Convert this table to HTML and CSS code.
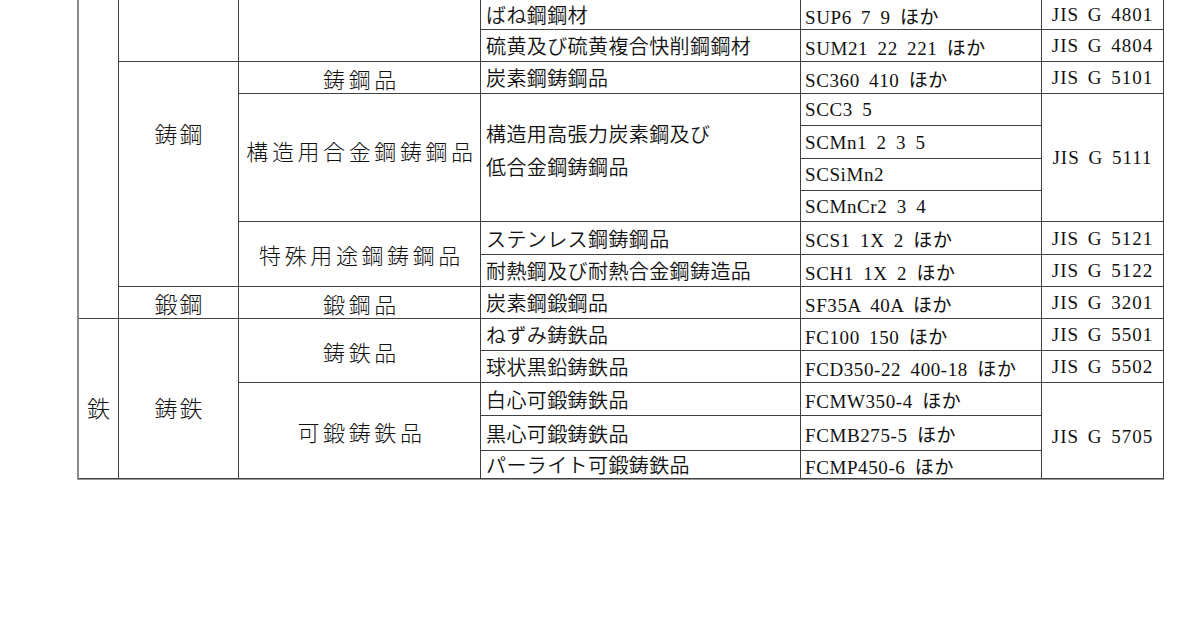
FILE: index.html
```html
<!DOCTYPE html>
<html lang="ja">
<head>
<meta charset="utf-8">
<title>鉄鋼材料 JIS 規格</title>
<link rel="stylesheet" href="styles.css">
</head>
<body>
<div class="sheet">
  <!-- column 1 -->
  <div class="cell s10"></div>
  <div class="cell s5 big center lower">鉄</div>

  <!-- column 2 -->
  <div class="cell s2"></div>
  <div class="cell s7 big center upper">鋳鋼</div>
  <div class="cell s1 big center">鍛鋼</div>
  <div class="cell s5 big center lower">鋳鉄</div>

  <!-- column 3 -->
  <div class="cell s2"></div>
  <div class="cell s1 mid center">鋳鋼品</div>
  <div class="cell s4 mid center up-a">構造用合金鋼鋳鋼品</div>
  <div class="cell s2 mid center">特殊用途鋼鋳鋼品</div>
  <div class="cell s1 mid center">鍛鋼品</div>
  <div class="cell s2 mid center">鋳鉄品</div>
  <div class="cell s3 mid center">可鍛鋳鉄品</div>

  <!-- column 4 -->
  <div class="cell s1 name">ばね鋼鋼材</div>
  <div class="cell s1 name">硫黄及び硫黄複合快削鋼鋼材</div>
  <div class="cell s1 name">炭素鋼鋳鋼品</div>
  <div class="cell s4 name multi">構造用高張力炭素鋼及び<br>低合金鋼鋳鋼品</div>
  <div class="cell s1 name">ステンレス鋼鋳鋼品</div>
  <div class="cell s1 name">耐熱鋼及び耐熱合金鋼鋳造品</div>
  <div class="cell s1 name">炭素鋼鍛鋼品</div>
  <div class="cell s1 name">ねずみ鋳鉄品</div>
  <div class="cell s1 name">球状黒鉛鋳鉄品</div>
  <div class="cell s1 name">白心可鍛鋳鉄品</div>
  <div class="cell s1 name">黒心可鍛鋳鉄品</div>
  <div class="cell s1 name">パーライト可鍛鋳鉄品</div>

  <!-- column 5 -->
  <div class="cell s1 code">SUP6 7 9 ほか</div>
  <div class="cell s1 code">SUM21 22 221 ほか</div>
  <div class="cell s1 code">SC360 410 ほか</div>
  <div class="cell s1 code">SCC3 5</div>
  <div class="cell s1 code">SCMn1 2 3 5</div>
  <div class="cell s1 code">SCSiMn2</div>
  <div class="cell s1 code">SCMnCr2 3 4</div>
  <div class="cell s1 code">SCS1 1X 2 ほか</div>
  <div class="cell s1 code">SCH1 1X 2 ほか</div>
  <div class="cell s1 code">SF35A 40A ほか</div>
  <div class="cell s1 code">FC100 150 ほか</div>
  <div class="cell s1 code">FCD350-22 400-18 ほか</div>
  <div class="cell s1 code">FCMW350-4 ほか</div>
  <div class="cell s1 code">FCMB275-5 ほか</div>
  <div class="cell s1 code">FCMP450-6 ほか</div>

  <!-- column 6 -->
  <div class="cell s1 std">JIS G 4801</div>
  <div class="cell s1 std">JIS G 4804</div>
  <div class="cell s1 std">JIS G 5101</div>
  <div class="cell s4 std">JIS G 5111</div>
  <div class="cell s1 std">JIS G 5121</div>
  <div class="cell s1 std">JIS G 5122</div>
  <div class="cell s1 std">JIS G 3201</div>
  <div class="cell s1 std">JIS G 5501</div>
  <div class="cell s1 std">JIS G 5502</div>
  <div class="cell s3 std lower-s">JIS G 5705</div>
</div>
</body>
</html>
```

FILE: styles.css
```css
html, body {
  margin: 0;
  padding: 0;
  background: #ffffff;
}

body {
  width: 1200px;
  height: 627px;
  overflow: hidden;
  font-family: "Liberation Serif", "Noto Sans CJK JP", serif;
  color: #111111;
}

.sheet {
  margin-left: 77px;
  width: 1085px;
  border-left: 2px solid #8c8c8c;
  border-bottom: 1px solid #9a9a9a;
  display: grid;
  grid-template-columns: 40px 120px 242px 320px 241px 122px;
  grid-template-rows: 30px 32px 32px 32px 33px 32px 31px 33px 32px 32px 32px 32px 33px 35px 28px;
  grid-auto-flow: column;
}

.cell {
  box-sizing: border-box;
  border-right: 1px solid #404040;
  border-bottom: 1px solid #404040;
  display: flex;
  align-items: center;
  white-space: nowrap;
  overflow: hidden;
}

.s1 { grid-row: span 1; }
.s2 { grid-row: span 2; }
.s3 { grid-row: span 3; }
.s4 { grid-row: span 4; }
.s5 { grid-row: span 5; }
.s7 { grid-row: span 7; }
.s10 { grid-row: span 10; }

.center {
  justify-content: center;
}

.big {
  font-family: "Noto Sans CJK JP", sans-serif;
  font-size: 23px;
  font-weight: 300;
  letter-spacing: 2px;
  padding-left: 2px;
}

.mid {
  font-family: "Noto Sans CJK JP", sans-serif;
  font-size: 22px;
  font-weight: 300;
  letter-spacing: 3.6px;
  padding-left: 4px;
}

.upper {
  padding-bottom: 82px;
}

.lower {
  padding-top: 16px;
}

.up-a {
  padding-bottom: 15px;
}

.name {
  font-family: "Noto Sans CJK JP", sans-serif;
  font-size: 20px;
  font-weight: 350;
  letter-spacing: 0.4px;
  padding-left: 5px;
}

.multi {
  line-height: 33px;
  padding-bottom: 16px;
}

.code {
  font-size: 19px;
  letter-spacing: 0.6px;
  word-spacing: 4px;
  padding-left: 4px;
  padding-top: 1px;
}

.std {
  font-size: 19px;
  letter-spacing: 1px;
  word-spacing: 3px;
  justify-content: center;
  padding-top: 1px;
}

.lower-s {
  padding-top: 12px;
}
```
